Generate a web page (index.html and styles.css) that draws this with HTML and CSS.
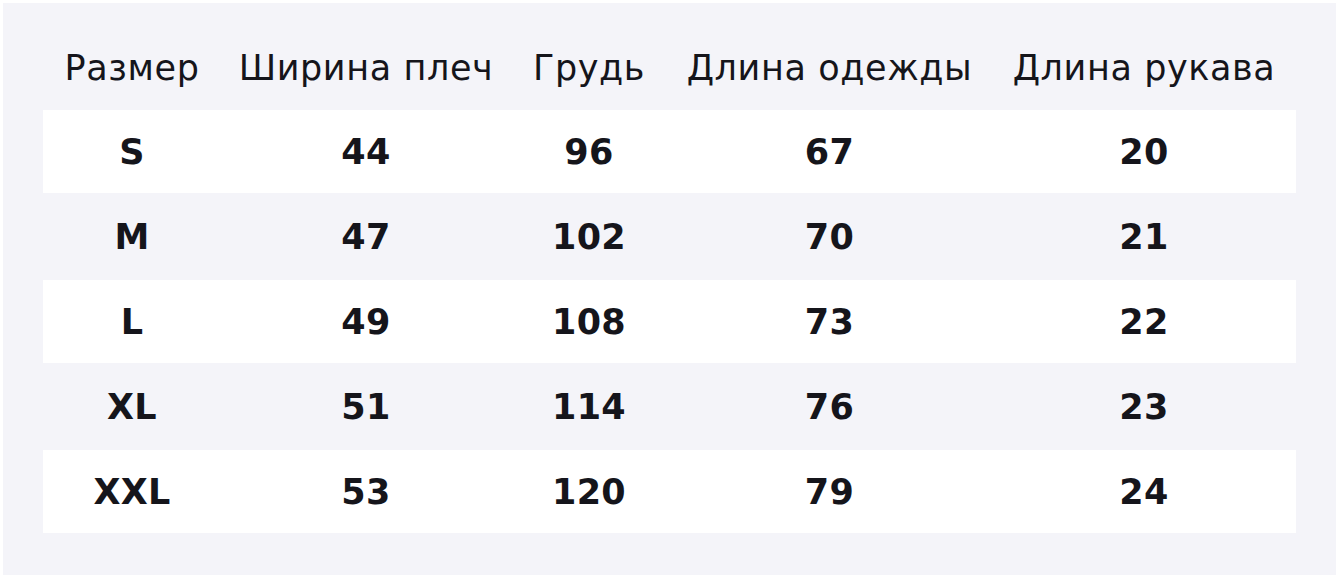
FILE: index.html
```html
<!DOCTYPE html>
<html lang="ru">
<head>
<meta charset="utf-8">
<title>Таблица размеров</title>
<link rel="stylesheet" href="styles.css">
</head>
<body>
<div class="panel">
  <table class="sizes">
    <colgroup>
      <col class="c1"><col class="c2"><col class="c3"><col class="c4"><col class="c5">
    </colgroup>
    <thead>
      <tr><th>Размер</th><th>Ширина плеч</th><th>Грудь</th><th>Длина одежды</th><th>Длина рукава</th></tr>
    </thead>
    <tbody>
      <tr class="odd"><td>S</td><td>44</td><td>96</td><td>67</td><td>20</td></tr>
      <tr class="even"><td>M</td><td>47</td><td>102</td><td>70</td><td>21</td></tr>
      <tr class="odd"><td>L</td><td>49</td><td>108</td><td>73</td><td>22</td></tr>
      <tr class="even"><td>XL</td><td>51</td><td>114</td><td>76</td><td>23</td></tr>
      <tr class="odd"><td>XXL</td><td>53</td><td>120</td><td>79</td><td>24</td></tr>
    </tbody>
  </table>
</div>
</body>
</html>
```
FILE: styles.css
```css
html, body {
  margin: 0;
  padding: 0;
  background: #ffffff;
}
body {
  padding: 3px;
  font-family: "DejaVu Sans", "Noto Sans", sans-serif;
  color: #15151b;
}
.panel {
  width: 1333px;
  height: 572px;
  box-sizing: border-box;
  background: #f4f4f9;
  padding: 22px 40px 42px 40px;
}
.sizes {
  width: 1253px;
  border-collapse: collapse;
  table-layout: fixed;
}
.c1 { width: 178px; }
.c2 { width: 290px; }
.c3 { width: 156px; }
.c4 { width: 325px; }
.c5 { width: 304px; }
.sizes th {
  height: 85px;
  padding: 0;
  font-size: 35px;
  letter-spacing: 0.6px;
  font-weight: normal;
  text-align: center;
  vertical-align: middle;
  white-space: nowrap;
}
.sizes td {
  padding: 0;
  font-size: 35px;
  letter-spacing: 0.3px;
  font-weight: bold;
  text-align: center;
  vertical-align: middle;
}
.sizes tr.odd td { height: 83px; background: #ffffff; }
.sizes tr.even td { height: 87px; background: transparent; }
```
